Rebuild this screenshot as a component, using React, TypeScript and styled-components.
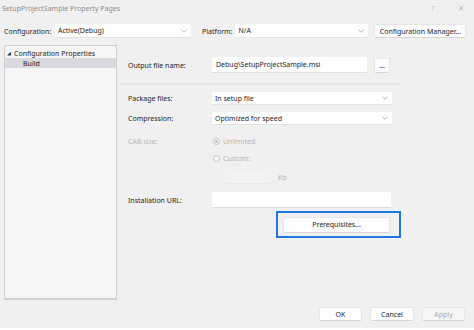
import styled, { createGlobalStyle } from 'styled-components';

const GlobalStyle = createGlobalStyle`
  html, body {
    margin: 0;
    padding: 0;
    background: #efefef;
  }
  * {
    box-sizing: border-box;
  }
`;

const Chevron = () => (
  <svg width="6" height="4" viewBox="0 0 6 4">
    <path d="M0.5 0.8 L3 3.2 L5.5 0.8" fill="none" stroke="#a0a0a0" strokeWidth="0.8" />
  </svg>
);

const App = (): JSX.Element => {
  return (
    <Window>
      <GlobalStyle />
      <TitleBar>
        <Title>SetupProjectSample Property Pages</Title>
        <TitleIcons>
          <TitleIcon>?</TitleIcon>
          <TitleIcon $big>×</TitleIcon>
        </TitleIcons>
      </TitleBar>

      <ConfigRow>
        <ConfigLabel $width={51}>Configuration:</ConfigLabel>
        <Combo $width={136}>
          <span>Active(Debug)</span>
          <Chevron />
        </Combo>
        <ConfigLabel $left={11} $right={3}>
          Platform:
        </ConfigLabel>
        <Combo $width={133}>
          <span>N/A</span>
          <Chevron />
        </Combo>
        <Button $width={92} $height={14} $left={6}>
          Configuration Manager...
        </Button>
      </ConfigRow>

      <Body>
        <TreePanel>
          <TreeItem>
            <Caret>◢</Caret>
            Configuration Properties
          </TreeItem>
          <TreeItem $selected $indent={18}>
            Build
          </TreeItem>
        </TreePanel>

        <Content>
          <Row $top={12}>
            <FieldLabel>Output file name:</FieldLabel>
            <TextBox $width={155} $height={16}>
              Debug\SetupProjectSample.msi
            </TextBox>
            <Button $width={16} $height={15} $left={7}>
              ...
            </Button>
          </Row>

          <Separator />

          <Row $top={7}>
            <FieldLabel>Package files:</FieldLabel>
            <Combo $width={180} $height={13}>
              <span>In setup file</span>
              <Chevron />
            </Combo>
          </Row>

          <Row $top={7}>
            <FieldLabel>Compression:</FieldLabel>
            <Combo $width={180} $height={13}>
              <span>Optimized for speed</span>
              <Chevron />
            </Combo>
          </Row>

          <Row $top={10} $height={12}>
            <FieldLabel $disabled>CAB size:</FieldLabel>
            <Radio $checked />
            <RadioText>Unlimited</RadioText>
          </Row>

          <Row $top={5} $height={12}>
            <FieldLabel />
            <Radio />
            <RadioText>Custom:</RadioText>
          </Row>

          <Row $top={7}>
            <FieldLabel />
            <DisabledBox />
            <RadioText $left={8}>Kb</RadioText>
          </Row>

          <Row $top={8}>
            <FieldLabel>Installation URL:</FieldLabel>
            <TextBox $width={179} $height={16} />
          </Row>

          <Highlight>
            <Button $width={107} $height={16}>
              Prerequisites...
            </Button>
          </Highlight>
        </Content>
      </Body>

      <Footer>
        <Button $width={43} $height={14}>
          OK
        </Button>
        <Button $width={44} $height={14}>
          Cancel
        </Button>
        <Button $width={43} $height={14} $disabled>
          Apply
        </Button>
      </Footer>
    </Window>
  );
};

const Window = styled.div`
  width: 474px;
  height: 330px;
  background: #f0f0f0;
  font-family: 'Noto Sans', 'Open Sans', sans-serif;
  font-size: 7px;
  color: #1e1e1e;
  display: flex;
  flex-direction: column;
  overflow: hidden;
  border-bottom: 2px solid #ffffff;
`;

const TitleBar = styled.div`
  height: 18px;
  display: flex;
  align-items: center;
  justify-content: space-between;
  padding: 0 10px 2px 2px;
`;

const Title = styled.div`
  color: #8c8c8c;
  font-size: 7px;
`;

const TitleIcons = styled.div`
  display: flex;
  align-items: center;
  gap: 24px;
`;

const TitleIcon = styled.span<{ $big?: boolean }>`
  color: #a0a0a0;
  font-size: ${(p) => (p.$big ? '10px' : '7px')};
  font-weight: 300;
`;

const ConfigRow = styled.div`
  display: flex;
  align-items: center;
  margin-top: 6px;
  padding-left: 4px;
  height: 14px;
`;

const ConfigLabel = styled.span<{ $width?: number; $left?: number; $right?: number }>`
  width: ${(p) => (p.$width ? `${p.$width}px` : 'auto')};
  margin-left: ${(p) => p.$left || 0}px;
  margin-right: ${(p) => p.$right || 0}px;
  white-space: nowrap;
`;

const Combo = styled.div<{ $width: number; $height?: number }>`
  width: ${(p) => p.$width}px;
  height: ${(p) => p.$height || 14}px;
  background: #ffffff;
  border-bottom: 1px solid #e2e2e2;
  display: flex;
  align-items: center;
  justify-content: space-between;
  padding: 0 4px 0 3px;
  white-space: nowrap;
`;

const Button = styled.div<{ $width: number; $height: number; $left?: number; $disabled?: boolean }>`
  width: ${(p) => p.$width}px;
  height: ${(p) => p.$height}px;
  margin-left: ${(p) => p.$left || 0}px;
  border: 1px solid #e6e6e6;
  border-bottom-color: #d6d6d6;
  border-radius: 2px;
  display: flex;
  align-items: center;
  justify-content: center;
  white-space: nowrap;
  color: ${(p) => (p.$disabled ? '#a8a8a8' : '#1e1e1e')};
  background: ${(p) => (p.$disabled ? '#f6f6f6' : '#fdfdfd')};
`;

const Body = styled.div`
  display: flex;
  margin-top: 7px;
  height: 255px;
`;

const TreePanel = styled.div`
  width: 113px;
  margin-left: 4px;
  background: #f5f5f5;
  border: 1px solid #cfcfcf;
  border-bottom-width: 2px;
  padding-top: 2px;
`;

const TreeItem = styled.div<{ $selected?: boolean; $indent?: number }>`
  height: 10px;
  display: flex;
  align-items: center;
  padding-left: ${(p) => p.$indent || 2}px;
  background: ${(p) => (p.$selected ? '#d9d9e2' : 'transparent')};
  white-space: nowrap;
`;

const Caret = styled.span`
  font-size: 5px;
  margin-right: 3px;
  color: #333;
`;

const Content = styled.div`
  flex: 1;
  display: flex;
  flex-direction: column;
  padding-left: 11px;
`;

const Row = styled.div<{ $top: number; $height?: number }>`
  display: flex;
  align-items: center;
  margin-top: ${(p) => p.$top}px;
  height: ${(p) => (p.$height ? `${p.$height}px` : 'auto')};
`;

const FieldLabel = styled.span<{ $disabled?: boolean }>`
  width: 84px;
  flex-shrink: 0;
  white-space: nowrap;
  color: ${(p) => (p.$disabled ? '#b4b4b4' : '#1e1e1e')};
`;

const TextBox = styled.div<{ $width: number; $height: number }>`
  width: ${(p) => p.$width}px;
  height: ${(p) => p.$height}px;
  background: #ffffff;
  border-bottom: 1px solid #dedede;
  display: flex;
  align-items: center;
  padding-left: 4px;
  white-space: nowrap;
`;

const Separator = styled.div`
  margin-top: 10px;
  margin-left: -8px;
  width: 281px;
  height: 2px;
  background: #e6e6e6;
`;

const Radio = styled.span<{ $checked?: boolean }>`
  width: 7px;
  height: 7px;
  margin-left: 1px;
  border-radius: 50%;
  border: 1px solid #c2c2c2;
  background: #f7f7f7;
  display: flex;
  align-items: center;
  justify-content: center;
  &::after {
    content: '';
    width: 3px;
    height: 3px;
    border-radius: 50%;
    background: ${(p) => (p.$checked ? '#bdbdbd' : 'transparent')};
  }
`;

const RadioText = styled.span<{ $left?: number }>`
  margin-left: ${(p) => p.$left ?? 3}px;
  color: #b4b4b4;
`;

const DisabledBox = styled.div`
  width: 45px;
  height: 13px;
  margin-left: 13px;
  background: #f2f2f2;
  border-bottom: 1px solid #e9e9e9;
`;

const Highlight = styled.div`
  margin-top: 3px;
  margin-left: 148px;
  width: 125px;
  height: 27px;
  border: 2px solid #1b78e0;
  display: flex;
  align-items: center;
  padding-left: 5px;
`;

const Footer = styled.div`
  display: flex;
  justify-content: flex-end;
  gap: 8px;
  margin-top: 7px;
  padding-right: 9px;
`;

export default App;
